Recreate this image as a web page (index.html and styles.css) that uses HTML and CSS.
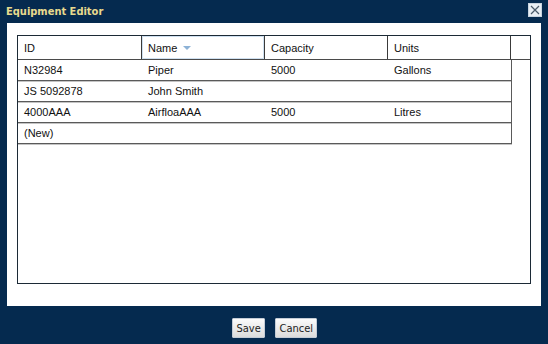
FILE: index.html
```html
<!DOCTYPE html>
<html>
<head>
<meta charset="utf-8">
<link rel="stylesheet" href="styles.css">
</head>
<body>
<div class="window">
  <div class="titlebar">
    <span class="title">Equipment Editor</span>
    <button class="close" aria-label="Close">
      <svg width="10" height="10" viewBox="0 0 10 10"><path d="M1 1 L9 9 M9 1 L1 9" stroke="#4a5a6a" stroke-width="1.2" fill="none"/></svg>
    </button>
  </div>
  <div class="panel">
    <div class="grid">
      <div class="header">
        <div class="hcell first">ID</div>
        <div class="hcell sorted">Name <span class="sort"></span></div>
        <div class="hcell">Capacity</div>
        <div class="hcell">Units</div>
        <div class="hfill"></div>
      </div>
      <div class="row"><div class="cell">N32984</div><div class="cell">Piper</div><div class="cell">5000</div><div class="cell">Gallons</div></div>
      <div class="row"><div class="cell">JS 5092878</div><div class="cell">John Smith</div><div class="cell"></div><div class="cell"></div></div>
      <div class="row"><div class="cell">4000AAA</div><div class="cell">AirfloaAAA</div><div class="cell">5000</div><div class="cell">Litres</div></div>
      <div class="row"><div class="cell">(New)</div><div class="cell"></div><div class="cell"></div><div class="cell"></div></div>
    </div>
  </div>
  <div class="footer">
    <button class="btn save">Save</button>
    <button class="btn cancel">Cancel</button>
  </div>
</div>
</body>
</html>
```
FILE: styles.css
```css
html, body {
  margin: 0;
  padding: 0;
  background: #052a4f;
}
.window {
  width: 548px;
  height: 344px;
  background: #052a4f;
  display: flex;
  flex-direction: column;
  font-family: "Liberation Sans", Arial, sans-serif;
}
.titlebar {
  height: 23px;
  display: flex;
  align-items: center;
  justify-content: space-between;
  padding: 0 6px 0 6px;
}
.title {
  font-family: "DejaVu Sans Condensed", "DejaVu Sans", sans-serif;
  font-weight: bold;
  font-size: 11px;
  color: #e8da8e;
  margin-top: 0;
}
.close {
  width: 14px;
  height: 14px;
  padding: 0;
  margin: -3px 0 0 0;
  border: 1px solid #c8d4e0;
  background: #e8eef4;
  display: flex;
  align-items: center;
  justify-content: center;
}
.panel {
  margin: 0 7px;
  height: 271px;
  background: #ffffff;
  padding: 12px 10px 0 10px;
}
.grid {
  width: 512px;
  height: 247px;
  border: 1px solid #1c2a36;
  background: #fff;
}
.header {
  display: flex;
  height: 23px;
  border-bottom: 1px solid #4a4a4a;
}
.hcell {
  width: 116px;
  border-right: 1px solid #3a3a3a;
  padding-left: 6px;
  font-size: 11px;
  color: #111;
  display: flex;
  align-items: center;
  background: #fff;
}
.hcell.first {
  width: 117px;
}
.hcell.sorted {
  box-shadow: inset 0 0 0 1px #cfe0f0;
}
.sort {
  display: inline-block;
  width: 0;
  height: 0;
  border-left: 4px solid transparent;
  border-right: 4px solid transparent;
  border-top: 4px solid #8db2d6;
  margin-left: 6px;
  margin-top: 1px;
}
.hfill {
  flex: 1;
}
.row {
  display: flex;
  width: 493px;
  height: 20px;
  border-right: 1px solid #5a5a5a;
  border-bottom: 1px solid #5a5a5a;
  box-shadow: 0 1px 0 #c4c4c4;
}
.row .cell {
  width: 117px;
  padding-left: 6px;
  font-size: 11px;
  color: #111;
  display: flex;
  align-items: center;
}
.row .cell:first-child {
  width: 118px;
}
.footer {
  flex: 1;
  display: flex;
  justify-content: center;
  align-items: flex-start;
  padding-top: 12px;
  gap: 10px;
}
.btn {
  height: 20px;
  padding: 0 4px;
  font-family: "DejaVu Sans Condensed", "DejaVu Sans", sans-serif;
  font-size: 11px;
  color: #222;
  border: 1px solid #c4ccd6;
  background: linear-gradient(#fbfbfb, #dcdcdc);
  border-radius: 1px;
}
.save { width: 33px; }
.cancel { width: 42px; }
```
